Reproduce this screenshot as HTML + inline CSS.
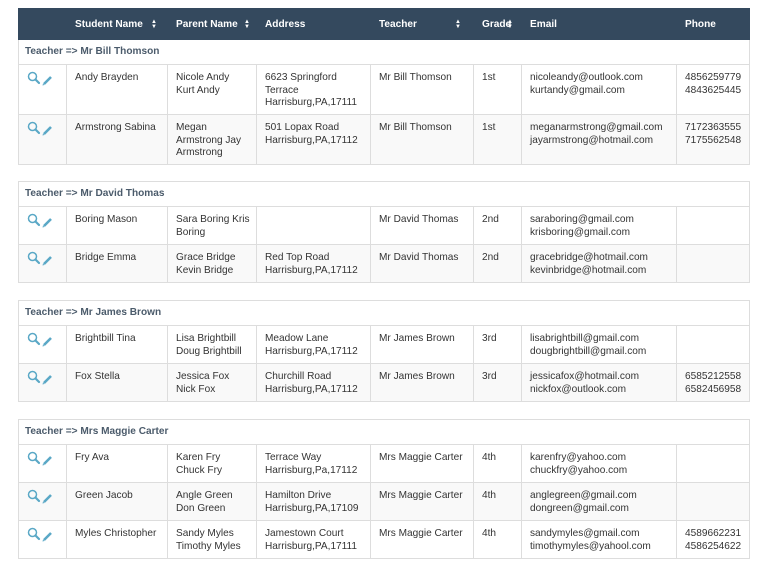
<!DOCTYPE html><html><head><style>
body{margin:0;background:#fff;font-family:"Liberation Sans",Arial,sans-serif;font-size:10.1px;color:#333;}
.g{position:absolute;left:18px;width:731px;}
table{border-collapse:collapse;table-layout:fixed;width:731px;}
td,th{border:1px solid #ddd;vertical-align:top;padding:7px 8px 0 8px;line-height:12.5px;overflow:hidden;white-space:nowrap}
th{background:#34495e;color:#fff;font-weight:bold;text-align:left;height:28px;padding:2px 8px 0 8px;vertical-align:middle;border-color:#34495e;position:relative}
.t td{height:24px;padding:0 6px;vertical-align:middle;font-weight:bold;color:#4b5b6b}
tr.r td{height:30px}
tr.r2 td{background:#f9f9f9}
.s{position:absolute;top:11px;font-size:6px;line-height:5px;color:#fff}
.ic{display:inline-block;vertical-align:top;margin-top:-1px}
</style></head><body>
<svg width="0" height="0" style="position:absolute"><defs>
<g id="i"><circle cx="5.5" cy="5.5" r="4" fill="none" stroke="#5aa8c6" stroke-width="1.5"/><path d="M8.5 8.5L12 12" stroke="#5aa8c6" stroke-width="2.2" stroke-linecap="round"/><path d="M17 13L24 6" stroke="#5aa8c6" stroke-width="2.6"/><path d="M15.5 14.5L16 12.5L17.5 14z" fill="#5aa8c6"/></g></defs></svg>
<div class="g" style="top:8px"><table>
<colgroup><col style="width:48px"><col style="width:101px"><col style="width:89px"><col style="width:114px"><col style="width:103px"><col style="width:48px"><col style="width:155px"><col style="width:73px"></colgroup>
<tr><th></th><th>Student Name<span class="s" style="left:84px">▲<br>▼</span></th><th>Parent Name<span class="s" style="left:76px">▲<br>▼</span></th><th>Address</th><th>Teacher<span class="s" style="left:84px">▲<br>▼</span></th><th>Grade<span class="s" style="left:33px">▲<br>▼</span></th><th>Email</th><th>Phone</th></tr>
<tr class="t"><td colspan="8">Teacher =&gt; Mr Bill Thomson</td></tr>
<tr class="r"><td style="height:42px"><svg width="28" height="16" class="ic"><use href="#i"/></svg></td><td>Andy Brayden</td><td>Nicole Andy<br>Kurt Andy</td><td>6623 Springford<br>Terrace<br>Harrisburg,PA,17111</td><td>Mr Bill Thomson</td><td>1st</td><td>nicoleandy@outlook.com<br>kurtandy@gmail.com</td><td>4856259779<br>4843625445</td></tr>
<tr class="r r2"><td style="height:42px"><svg width="28" height="16" class="ic"><use href="#i"/></svg></td><td>Armstrong Sabina</td><td>Megan<br>Armstrong Jay<br>Armstrong</td><td>501 Lopax Road<br>Harrisburg,PA,17112</td><td>Mr Bill Thomson</td><td>1st</td><td>meganarmstrong@gmail.com<br>jayarmstrong@hotmail.com</td><td>7172363555<br>7175562548</td></tr>
</table></div>

<div class="g" style="top:181px"><table>
<colgroup><col style="width:48px"><col style="width:101px"><col style="width:89px"><col style="width:114px"><col style="width:103px"><col style="width:48px"><col style="width:155px"><col style="width:73px"></colgroup>
<tr class="t"><td colspan="8">Teacher =&gt; Mr David Thomas</td></tr>
<tr class="r"><td><svg width="28" height="16" class="ic"><use href="#i"/></svg></td><td>Boring Mason</td><td>Sara Boring Kris<br>Boring</td><td></td><td>Mr David Thomas</td><td>2nd</td><td>saraboring@gmail.com<br>krisboring@gmail.com</td><td></td></tr>
<tr class="r r2"><td><svg width="28" height="16" class="ic"><use href="#i"/></svg></td><td>Bridge Emma</td><td>Grace Bridge<br>Kevin Bridge</td><td>Red Top Road<br>Harrisburg,PA,17112</td><td>Mr David Thomas</td><td>2nd</td><td>gracebridge@hotmail.com<br>kevinbridge@hotmail.com</td><td></td></tr>
</table></div>

<div class="g" style="top:300px"><table>
<colgroup><col style="width:48px"><col style="width:101px"><col style="width:89px"><col style="width:114px"><col style="width:103px"><col style="width:48px"><col style="width:155px"><col style="width:73px"></colgroup>
<tr class="t"><td colspan="8">Teacher =&gt; Mr James Brown</td></tr>
<tr class="r"><td><svg width="28" height="16" class="ic"><use href="#i"/></svg></td><td>Brightbill Tina</td><td>Lisa Brightbill<br>Doug Brightbill</td><td>Meadow Lane<br>Harrisburg,PA,17112</td><td>Mr James Brown</td><td>3rd</td><td>lisabrightbill@gmail.com<br>dougbrightbill@gmail.com</td><td></td></tr>
<tr class="r r2"><td><svg width="28" height="16" class="ic"><use href="#i"/></svg></td><td>Fox Stella</td><td>Jessica Fox<br>Nick Fox</td><td>Churchill Road<br>Harrisburg,PA,17112</td><td>Mr James Brown</td><td>3rd</td><td>jessicafox@hotmail.com<br>nickfox@outlook.com</td><td>6585212558<br>6582456958</td></tr>
</table></div>

<div class="g" style="top:419px"><table>
<colgroup><col style="width:48px"><col style="width:101px"><col style="width:89px"><col style="width:114px"><col style="width:103px"><col style="width:48px"><col style="width:155px"><col style="width:73px"></colgroup>
<tr class="t"><td colspan="8">Teacher =&gt; Mrs Maggie Carter</td></tr>
<tr class="r"><td><svg width="28" height="16" class="ic"><use href="#i"/></svg></td><td>Fry Ava</td><td>Karen Fry<br>Chuck Fry</td><td>Terrace Way<br>Harrisburg,Pa,17112</td><td>Mrs Maggie Carter</td><td>4th</td><td>karenfry@yahoo.com<br>chuckfry@yahoo.com</td><td></td></tr>
<tr class="r r2"><td><svg width="28" height="16" class="ic"><use href="#i"/></svg></td><td>Green Jacob</td><td>Angle Green<br>Don Green</td><td>Hamilton Drive<br>Harrisburg,PA,17109</td><td>Mrs Maggie Carter</td><td>4th</td><td>anglegreen@gmail.com<br>dongreen@gmail.com</td><td></td></tr>
<tr class="r"><td><svg width="28" height="16" class="ic"><use href="#i"/></svg></td><td>Myles Christopher</td><td>Sandy Myles<br>Timothy Myles</td><td>Jamestown Court<br>Harrisburg,PA,17111</td><td>Mrs Maggie Carter</td><td>4th</td><td>sandymyles@gmail.com<br>timothymyles@yahool.com</td><td>4589662231<br>4586254622</td></tr>
</table></div>
</body></html>
